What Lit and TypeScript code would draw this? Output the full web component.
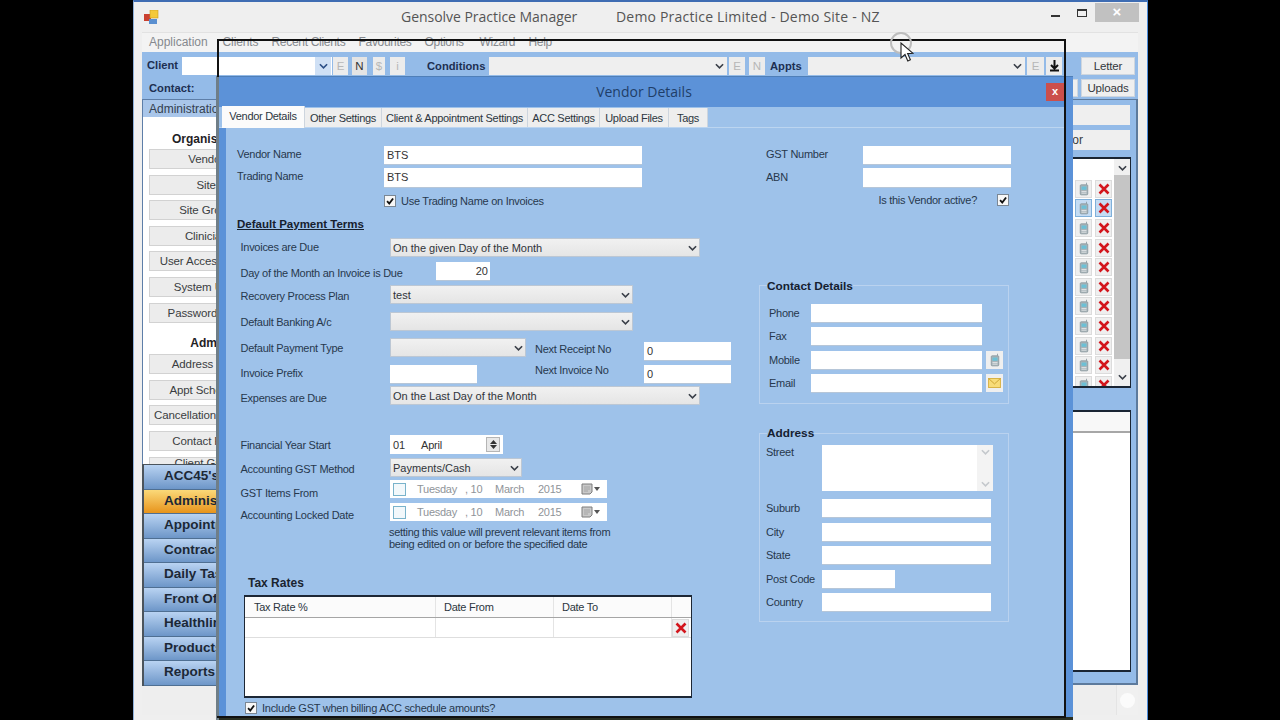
import { LitElement, html, css } from "lit";
import { customElement } from "lit/decorators.js";

const chev = (c = "#3a3f48") => html`<svg class="chev" viewBox="0 0 10 6"><path d="M1 1l4 4 4-4" fill="none" stroke=${c} stroke-width="1.8"/></svg>`;
const redX = html`<svg class="xic" viewBox="0 0 12 12"><path d="M1.5 1.5l9 9M10.5 1.5l-9 9" stroke="#d3151c" stroke-width="2.6" fill="none"/></svg>`;
const phone = html`<svg class="phic" viewBox="0 0 12 16"><rect x="1.5" y="3" width="9" height="12" rx="1" fill="#a9b4b8" stroke="#88979d"/><rect x="3" y="5" width="6" height="4" fill="#6cc0d6"/><path d="M3 11h6M3 13h6" stroke="#e4e8ea"/><path d="M9 3V0.5" stroke="#88979d"/></svg>`;
const mail = html`<svg class="mlic" viewBox="0 0 14 11"><rect x=".5" y=".5" width="13" height="10" fill="#f8dc78" stroke="#d6ae3c"/><path d="M.5.5l6.5 6 6.5-6" fill="none" stroke="#c9a030"/></svg>`;
const cal = html`<svg class="calic" viewBox="0 0 20 12"><path d="M1 1h10v8l-2 2H1z" fill="#c9c9c9" stroke="#7d7d7d"/><path d="M3 4h6M3 6h6M3 8h4" stroke="#a4a4a4"/><path d="M13 4h6l-3 4z" fill="#555"/></svg>`;
const check = html`<span class="cb"><svg viewBox="0 0 12 12"><path d="M2.5 6.2l2.6 2.8 4.6-6" fill="none" stroke="#111" stroke-width="2.2"/></svg></span>`;

const sel = (cls: string, text = "") => html`<div class="sel ${cls}"><span>${text}</span>${chev()}</div>`;
const date = html`<div class="date"><i class="dbox"></i><span class="d1">Tuesday</span><span class="d2">, 10</span><span class="d3">March</span><span class="d4">2015</span>${cal}</div>`;

@customElement("app-root")
export class AppRoot extends LitElement {
  static styles = css`
    :host { display: block; position: relative; width: 1280px; height: 720px; overflow: hidden; background: #000;
      font-family: "Liberation Sans", Arial, sans-serif; font-size: 11px; color: #27384d; }
    * { box-sizing: border-box; }

    .main { position: absolute; left: 133px; top: 0; width: 1015px; height: 720px; background: #efefef; display: flex; flex-direction: column;
      border-top: 2px solid #3f6db3; border-left: 1px solid #8fb0da; border-right: 1px solid #4d8ddc; }
    .title { height: 30px; display: flex; align-items: flex-start; flex: none; font-family: "Open Sans", sans-serif; font-size: 14px; color: #555; }
    .logo { width: 15px; height: 15px; margin: 8px 0 0 10px; flex: none; }
    .t1 { margin: 5px 0 0 242px; width: 215px; letter-spacing: -.03px; white-space: nowrap; }
    .t2 { margin-top: 5px; width: 435px; white-space: nowrap; letter-spacing: .19px; }
    .wmin { width: 9px; height: 2px; background: #333; margin: 13px 0 0 0; }
    .wmax { width: 10px; height: 8px; border: 1px solid #333; border-top-width: 2px; margin: 7px 0 0 17px; }
    .wclose { width: 44px; height: 19px; background: #c1c1c1; margin: 1px 0 0 8px; color: #fff; text-align: center; font-size: 15px; line-height: 18px; font-family: "Liberation Sans", sans-serif; font-weight: bold; }

    .menu { flex: none; height: 20px; margin: 0 9px 0 8px; background: #f3f3f3; display: flex; align-items: center; font-size: 12px; color: #85898e; padding: 0 0 2px 7px; border-top: 1px solid #e2e2e2; }
    .menu span { white-space: nowrap; flex: none; letter-spacing: -.3px; }
    .menu span:nth-child(1) { width: 73.5px; letter-spacing: 0; }
    .menu span:nth-child(2) { width: 49px; letter-spacing: -.1px; }
    .menu span:nth-child(3) { width: 87px; }
    .menu span:nth-child(4) { width: 66px; }
    .menu span:nth-child(5) { width: 55px; }
    .menu span:nth-child(6) { width: 49px; }

    .content { flex: 1; margin: 0 9px 5px 8px; background: #94bbe8; display: flex; flex-direction: column; min-height: 0; position: relative; }
    .bar1 { flex: none; height: 27px; padding: 5px 0 0 5px; display: flex; align-items: flex-start; }
    .blab { font-weight: bold; color: #1d2f52; font-size: 11.2px; line-height: 18px; white-space: nowrap; }
    .bl1 { width: 35px; margin-top: -1px; }
    .bl2 { width: 62px; margin-left: 22px; }
    .bl3 { width: 38px; margin-left: 5px; }
    .combo { height: 18px; display: flex; justify-content: flex-end; align-items: stretch; flex: none; }
    .cwhite { width: 150px; background: #fff; }
    .cw2 { width: 238px; background: #efefef; }
    .cw3 { width: 217px; background: #efefef; }
    .cbtn { width: 16px; display: flex; align-items: center; justify-content: center; }
    .cwhite .cbtn { background: #cfe0f5; margin-right: 1px; }
    .chev { width: 9px; height: 6px; flex: none; }
    .tb { width: 15px; height: 18px; background: #ececec; color: #b7b7b7; text-align: center; line-height: 18px; font-size: 11.5px; flex: none; }
    .tb.on { color: #333; background: #e4e4e4; }
    .ml1 { margin-left: 1px; } .ml2 { margin-left: 2px; } .ml4 { margin-left: 4px; } .ml5 { margin-left: 5px; } .ml6 { margin-left: 6px; }
    .tb.w12 { width: 12px; } .tb.w16 { width: 16px; } .tb.w17 { width: 17px; }
    .tb svg { width: 11px; height: 13px; margin-top: 2px; }
    .wbtn { width: 54px; height: 18px; background: #efefef; border: 1px solid #cfd6de; text-align: center; line-height: 16px; font-size: 11.5px; letter-spacing: -.15px; color: #33373d; flex: none; margin-left: 19px; }

    .bar2 { flex: none; height: 20px; display: flex; align-items: flex-start; padding-left: 7px; }
    .bar2 .spacer { flex: 1; }
    .sliver { width: 60px; height: 18px; background: #efefef; border: 1px solid #cfd6de; flex: none; }
    .bar2 .wbtn { margin: 0 3px 0 3px; }
    .body { flex: 1; display: flex; min-height: 0; justify-content: space-between; }

    .leftb { width: 160px; display: flex; flex-direction: column; position: relative; }
    .tabhead { height: 18px; width: 110px; background: #a9c6ea; border: 1px solid #5d7ea8; border-bottom: 0; padding-left: 6px; line-height: 18px; font-size: 12px; color: #33404f; white-space: nowrap; flex: none; }
    .panel { flex: 1; background: #fff; border-left: 1px solid #5d7ea8; min-height: 0; display: flex; flex-direction: column; align-items: flex-start; padding-left: 6px; }
    .lstat { flex: none; height: 30px; background: #eee; }
    .ph { width: 120px; text-align: center; font-weight: bold; font-size: 12px; color: #1f2225; line-height: 14px; flex: none; white-space: nowrap; }
    .ph1 { margin-top: 15px; margin-bottom: 3px; }
    .ph2 { margin-top: 8px; margin-bottom: 4px; }
    .lb { width: 120px; height: 20px; background: #ececec; border: 1px solid #d2d2d2; margin-bottom: 5.6px; text-align: center; line-height: 18px; font-size: 11.5px; letter-spacing: -.1px; color: #3a3d41; flex: none; white-space: nowrap; }
    .lb.cut { height: 10px; margin: 0; border-bottom: 0; line-height: 11px; }
    .acc { position: absolute; left: 0; top: 365px; width: 160px; border-left: 2px solid #4b545c; border-top: 1px solid #4b545c; }
    .ai { height: 24.5px; background: linear-gradient(#b9d3f2, #6d96c8); border-bottom: 1px solid #4f6f92; padding-left: 20px; font-weight: bold; font-size: 13.5px; line-height: 22px; color: #1c2836; white-space: nowrap; }
    .ai.act { background: linear-gradient(#fbd979, #e7941c); }

    .rightb { width: 100px; margin-bottom: 30px; display: flex; flex-direction: column; border: 1px solid #5d7a9c; border-width: 1px 2px 2px 1px; padding-top: 5px; align-items: stretch; }
    .rbtn { height: 20px; margin-right: 6px; background: #efefef; margin-bottom: 5px; text-align: right; padding-right: 47px; line-height: 20px; font-size: 12px; color: #3a3d41; flex: none; }
    .list { height: 231px; margin: 2px 5px 0 0; background: #fff; border-top: 2px solid #1a2533; border-right: 1px solid #1a2533; border-bottom: 2px solid #1a2533; display: flex; justify-content: flex-end; overflow: hidden; flex: none; }
    .cells { width: 58px; }
    .lhead { height: 20px; }
    .lrow { height: 19.6px; display: flex; padding-left: 19px; gap: 3px; align-items: center; }
    .cell { width: 17px; height: 18px; background: #efefef; border: 1px solid #dcdcdc; display: flex; align-items: center; justify-content: center; flex: none; }
    .lrow.sel2 .cell { background: #c5dcf3; border-color: #7fb0da; }
    .xic { width: 12px; height: 12px; }
    .phic { width: 10px; height: 14px; }
    .mlic { width: 13px; height: 10px; }
    .sb { width: 16px; background: #f0f0f0; flex: none; display: flex; flex-direction: column; align-items: center; padding-top: 6px; }
    .sb .thumb { width: 100%; height: 184px; background: #c5c5c5; margin: 4px 0 15px; }
    .grid2 { height: 262px; margin: 22px 5px 0 0; background: #fff; border: 1px solid #1a2533; border-width: 2px 1px 2px 1px; flex: none; }
    .grid2 div { height: 21px; background: #f8f8f8; border-bottom: 2px solid #a7a7a7; }
    .stbar { height: 30px; display: flex; justify-content: flex-end; background: #eee; position: absolute; right: 0; bottom: 0; width: 100px; }
    .dot { width: 22px; display: flex; align-items: center; justify-content: center; background: #f0f0f0; border-left: 1px solid #e4e4e4; }
    .dot i { width: 15px; height: 15px; border-radius: 50%; background: #fbfbfb; }

    .dialog { position: absolute; left: 216px; top: 76px; width: 857px; height: 644px; background: #5b92d8; border-left: 3px solid #6f7e88; border-top: 1px solid #4f7fb8; display: flex; flex-direction: column; }
    .dtitle { height: 30px; flex: none; display: flex; align-items: center; justify-content: center; font-family: "Open Sans", sans-serif; font-size: 14px; color: #1f3e68; position: relative; padding: 0 4px 2px 0; background: #5c92d8; }
    .dclose { position: absolute; left: 827px; top: 6px; width: 18px; height: 18px; background: #cb4f4c; color: #fff; font: bold 11px/17px "Liberation Sans", sans-serif; text-align: center; }
    .tabs { flex: none; height: 21px; width: 846px; background: #9ec2ea; display: flex; align-items: flex-end; padding-left: 3px; border-bottom: 1px solid #bcd5f0; }
    .tab { height: 19px; background: #eeeeee; border-right: 1px solid #cdd5de; font-size: 11px; letter-spacing: -.3px; line-height: 20px; text-align: center; white-space: nowrap; color: #2c3640; flex: none; }
    .tab.a { height: 22px; width: 83px; background: #fbfbfb; margin-bottom: -1px; line-height: 20px; position: relative; }
    .tb1 { width: 77px; } .tb2 { width: 146px; } .tb3 { width: 72px; } .tb4 { width: 69px; } .tb5 { width: 39px; }
    .page { flex: none; width: 839px; height: 589px; margin-left: 7px; background: #9ec2ea; padding: 18px 0 0 11px; display: flex; position: relative; letter-spacing: -.27px; }
    .dfoot { flex: 1; background: #2a2f22; }

    .lgrid { width: 522px; flex: none; display: grid; grid-template-columns: 153px 369px;
      grid-template-rows: 22px 26px 23px 21px 24px 23px 27px 26px 27px 21px 49px 23px 22px 23px 23px 49px 20px 107px 18px; }
    .lab { line-height: 14px; white-space: nowrap; color: #27384d; }
    .in3 { padding-left: 3.5px; }
    .m1 { margin-top: 1px; } .m2 { margin-top: 2px; } .m3 { margin-top: 3px; } .m4 { margin-top: 4px; } .m5 { margin-top: 5px; } .m6 { margin-top: 6px; } .mn2 { margin-top: -2px; }
    .inp { background: #fff; height: 18px; box-shadow: 0 1px 0 #b6c6d8; line-height: 18px; padding: 0 3px; color: #333; white-space: nowrap; flex: none; font-size: 11px; letter-spacing: 0; }
    .h19 { height: 19px; }
    .nudge { margin-left: -6px; width: 258px; }
    .sel { height: 19px; background: linear-gradient(#f1f1f1, #e5e5e5); border: 1px solid #bcc7d4; display: flex; align-items: center; justify-content: space-between; padding: 0 2px 0 2px; color: #30343a; flex: none; font-size: 11px; letter-spacing: 0; }
    .w310 { width: 310px; } .w243 { width: 243px; } .w136 { width: 136px; } .w132 { width: 132px; }
    .ccheck { margin-left: -6px; display: flex; align-items: center; gap: 5px; height: 14px; }
    .cb { width: 12px; height: 12px; background: #f7f7f7; border: 1px solid #7b8794; display: inline-flex; flex: none; }
    .cb svg { width: 10px; height: 10px; }
    .head { grid-column: 1 / -1; font-weight: bold; font-size: 11.5px; text-decoration: underline; color: #16202e; line-height: 14px; white-space: nowrap; letter-spacing: 0; }
    .num { width: 54px; margin-left: 46px; text-align: right; padding-right: 2px; }
    .pair { display: flex; align-items: flex-start; }
    .plab { line-height: 14px; white-space: nowrap; width: 109px; flex: none; }
    .pin { width: 87px; }
    .w87 { width: 87px; }
    .ml9 { margin-left: 9px; } .ml58 { margin-left: 58px; }
    .spin { width: 113px; height: 19px; background: #fff; display: flex; align-items: center; padding-left: 3px; color: #333; letter-spacing: 0; }
    .spin .sm { width: 28px; }
    .spin .sa { width: 65px; letter-spacing: -.2px; }
    .sp { width: 14px; height: 15px; border: 1px solid #b5b5b5; background: #e8e8e8; display: flex; flex-direction: column; align-items: center; justify-content: space-around; padding: 2px 0; }
    .sp svg { width: 7px; height: 4px; }
    .date { width: 217px; height: 18px; background: #fff; display: flex; align-items: center; color: #8f9499; position: relative; flex: none; }
    .dbox { width: 13px; height: 13px; border: 1px solid #79b3cb; background: #f2f8fb; margin-left: 3px; flex: none; }
    .d1 { margin-left: 11px; width: 48px; } .d2 { width: 30px; } .d3 { width: 43px; } .d4 { width: 43px; }
    .calic { width: 20px; height: 12px; flex: none; }
    .note { line-height: 12px; color: #27384d; margin-left: -1px; white-space: nowrap; letter-spacing: -.3px; }
    .thead { grid-column: 1 / -1; padding: 1px 0 0 11px; font-weight: bold; font-size: 12px; color: #1a2430; line-height: 14px; letter-spacing: 0; }
    .ttable { grid-column: 1 / -1; margin-left: 7px; width: 448px; height: 103px; background: #fff; border: 2px solid #1d2735; border-width: 2px 1.5px; display: flex; flex-direction: column; }
    .tr { display: grid; grid-template-columns: 191px 118px 118px 1fr; flex: none; }
    .tr.h { height: 21px; border-bottom: 1px solid #a5a5a5; line-height: 20px; background: #fbfbfb; }
    .tr.d { height: 20px; border-bottom: 1px solid #dedede; }
    .tr > span { border-right: 1px solid #e4e4e4; padding-left: 8px; white-space: nowrap; color: #2c3640; }
    .tr > span:first-child { padding-left: 9px; }
    .tr > span:last-child { border-right: 0; padding: 0; display: flex; align-items: center; }
    .incl { grid-column: 1 / -1; margin-left: 8px; display: flex; gap: 5px; align-items: center; height: 12px; white-space: nowrap; }

    .rcol { width: 252px; flex: none; display: flex; flex-direction: column; }
    .rrow { display: flex; padding-left: 7px; }
    .rrow .lab { width: 97px; flex: none; }
    .r1 { height: 22px; } .r2 { height: 26px; }
    .active { height: 14px; display: flex; justify-content: flex-end; align-items: flex-start; gap: 20px; padding-right: 2px; }
    .active .lab { margin-top: -1px; }
    .rw { width: 148px; }
    .group { border: 1px solid #bad2ef; width: 250px; flex: none; position: relative; display: flex; flex-direction: column; }
    .legend { font-weight: bold; font-size: 11.8px; line-height: 14px; color: #152030; background: #9ec2ea; margin: -8px 0 0 7px; width: fit-content; white-space: nowrap; flex: none; letter-spacing: 0; }
    .g1 { margin-top: 77px; height: 119px; }
    .g1 .legend { margin-top: -7px; }
    .g2 { margin-top: 29px; height: 189px; }
    .grow { display: flex; align-items: flex-start; flex: none; }
    .g1 .grow { height: 23.4px; padding-left: 9px; }
    .g1 .lab { width: 42px; margin-top: 2px; flex: none; }
    .g1 .inp { width: 171px; }
    .g1 .rows { margin-top: 11px; }
    .ibtn { width: 17px; height: 18px; margin-left: 4px; background: #efefef; display: flex; align-items: center; justify-content: center; flex: none; }
    .g2 .grow { height: 23.5px; padding-left: 6px; }
    .g2 .lab { width: 56px; margin-top: 2px; flex: none; }
    .g2 .inp { width: 169px; }
    .g2 .w73 { width: 73px; }
    .tarea { width: 171px; height: 46px; background: #fff; flex: none; display: flex; justify-content: flex-end; }
    .tsb { width: 16px; background: #f3f3f3; display: flex; flex-direction: column; justify-content: space-between; align-items: center; padding: 4px 0; }
    .g2 .street { height: 54px; margin-top: 5px; }
    .g2 .street .lab { margin-top: 0; }

    .frame { position: absolute; left: 217px; top: 39px; width: 849px; height: 679px; border: 2px solid #111; border-left: 0; pointer-events: none; }
    .frame::before { content: ""; position: absolute; left: 0; top: -2px; width: 2px; height: 38px; background: #111; }
    .ring { position: absolute; left: 890px; top: 32px; width: 22px; height: 22px; border-radius: 50%; border: 2px solid #bdbdbd; }
    .cursor { position: absolute; left: 900px; top: 42px; width: 14px; height: 21px; }
  `;

  render() {
    const lefts = ["Vendors", "Sites", "Site Groups", "Clinicians", "User Access Levels", "System Users", "Password Policy"];
    const adm = ["Address Types", "Appt Schedules", "Cancellation Reasons", "Contact Points"];
    const acc = ["ACC45's", "Administ", "Appointments", "Contracts", "Daily Tasks", "Front Office", "Healthlink", "Products", "Reports"];
    const rows = Array.from({ length: 11 }, (_, i) => i);
    return html`
      <div class="main">
        <div class="title">
          <svg class="logo" viewBox="0 0 15 15">
            <rect x="0" y="4" width="7" height="7" fill="#c9402f"/>
            <rect x="6" y="0" width="8" height="8" fill="#f4c93a" stroke="#c99b20" stroke-width=".6"/>
            <rect x="5" y="9" width="8" height="5" fill="#5a8fd0"/>
          </svg>
          <span class="t1">Gensolve Practice Manager</span>
          <span class="t2">Demo Practice Limited - Demo Site - NZ</span>
          <span class="wmin"></span><span class="wmax"></span><span class="wclose">×</span>
        </div>
        <div class="menu">
          <span>Application</span><span>Clients</span><span>Recent Clients</span><span>Favourites</span><span>Options</span><span>Wizard</span><span>Help</span>
        </div>
        <div class="content">
          <div class="bar1">
            <span class="blab bl1">Client</span>
            <div class="combo cwhite"><span class="cbtn">${chev("#2c4f86")}</span></div>
            <span class="tb ml1">E</span><span class="tb on ml4">N</span><span class="tb w12 ml6">$</span><span class="tb ml5">i</span>
            <span class="blab bl2">Conditions</span>
            <div class="combo cw2"><span class="cbtn">${chev()}</span></div>
            <span class="tb w16 ml2">E</span><span class="tb w16 ml4">N</span>
            <span class="blab bl3">Appts</span>
            <div class="combo cw3"><span class="cbtn">${chev()}</span></div>
            <span class="tb w17 ml2">E</span>
            <span class="tb w16 ml2"><svg viewBox="0 0 11 13"><path d="M5.5 1v7M2 6l3.5 3.5L9 6M1 11.5h9" fill="none" stroke="#111" stroke-width="2"/></svg></span>
            <span class="wbtn">Letter</span>
          </div>
          <div class="bar2">
            <span class="blab">Contact:</span>
            <span class="spacer"></span>
            <span class="sliver"></span>
            <span class="wbtn">Uploads</span>
          </div>
          <div class="body">
            <div class="leftb">
              <div class="tabhead">Administration</div>
              <div class="panel">
                <div class="ph ph1">Organisation</div>
                ${lefts.map((t) => html`<div class="lb">${t}</div>`)}
                <div class="ph ph2">Admin</div>
                ${adm.map((t) => html`<div class="lb">${t}</div>`)}
                <div class="lb cut">Client Groups</div>
              </div>
              <div class="lstat"></div>
              <div class="acc">
                ${acc.map((t, i) => html`<div class="ai ${i === 1 ? "act" : ""}">${t}</div>`)}
              </div>
            </div>
            <div class="rightb">
              <div class="rbtn"></div>
              <div class="rbtn">Editor</div>
              <div class="list">
                <div class="cells">
                  <div class="lhead"></div>
                  ${rows.map((i) => html`<div class="lrow ${i === 1 ? "sel2" : ""}"><span class="cell">${phone}</span><span class="cell">${redX}</span></div>`)}
                </div>
                <div class="sb">${chev()}<div class="thumb"></div>${chev()}</div>
              </div>
              <div class="grid2"><div></div></div>
            </div>
          </div>
          <div class="stbar"><span class="dot"><i></i></span></div>
        </div>
      </div>

      <div class="dialog">
        <div class="dtitle">Vendor Details<span class="dclose">x</span></div>
        <div class="tabs">
          <span class="tab a">Vendor Details</span><span class="tab tb1">Other Settings</span><span class="tab tb2">Client &amp; Appointment Settings</span><span class="tab tb3">ACC Settings</span><span class="tab tb4">Upload Files</span><span class="tab tb5">Tags</span>
        </div>
        <div class="page">
          <div class="lgrid">
            <span class="lab m1">Vendor Name</span><div class="inp nudge">BTS</div>
            <span class="lab m1">Trading Name</span><div class="inp h19 nudge">BTS</div>
            <span></span><div class="ccheck">${check}<span class="lab">Use Trading Name on Invoices</span></div>
            <div class="head">Default Payment Terms</div>
            <span class="lab in3 m2">Invoices are Due</span>${sel("w310", "On the given Day of the Month")}
            <span class="lab in3 m4">Day of the Month an Invoice is Due</span><div class="inp num">20</div>
            <span class="lab in3 m4">Recovery Process Plan</span>${sel("w243", "test")}
            <span class="lab in3 m3">Default Banking A/c</span>${sel("w243")}
            <span class="lab in3 m3">Default Payment Type</span>
            <div class="pair">${sel("w136")}<span class="plab ml9 m4">Next Receipt No</span><div class="inp pin m4">0</div></div>
            <span class="lab in3 m1">Invoice Prefix</span>
            <div class="pair"><div class="inp w87"></div><span class="plab ml58 mn2">Next Invoice No</span><div class="inp pin">0</div></div>
            <span class="lab in3 m5">Expenses are Due</span>${sel("w310", "On the Last Day of the Month")}
            <span class="lab in3 m3">Financial Year Start</span>
            <div class="spin"><span class="sm">01</span><span class="sa">April</span>
              <span class="sp"><svg viewBox="0 0 7 4"><path d="M3.5 0L7 4H0z" fill="#333"/></svg><svg viewBox="0 0 7 4"><path d="M0 0h7L3.5 4z" fill="#333"/></svg></span></div>
            <span class="lab in3 m4">Accounting GST Method</span>${sel("w132", "Payments/Cash")}
            <span class="lab in3 m6">GST Items From</span>${date}
            <span class="lab in3 m5">Accounting Locked Date</span>${date}
            <span></span><div class="note">setting this value will prevent relevant items from<br />being edited on or before the specified date</div>
            <div class="thead">Tax Rates</div>
            <div class="ttable">
              <div class="tr h"><span>Tax Rate %</span><span>Date From</span><span>Date To</span><span></span></div>
              <div class="tr d"><span></span><span></span><span></span><span><i class="cell">${redX}</i></span></div>
            </div>
            <div class="incl">${check}<span class="lab">Include GST when billing ACC schedule amounts?</span></div>
          </div>

          <div class="rcol">
            <div class="rrow r1"><span class="lab m1">GST Number</span><div class="inp rw"></div></div>
            <div class="rrow r2"><span class="lab m2">ABN</span><div class="inp h19 rw"></div></div>
            <div class="active"><span class="lab">Is this Vendor active?</span>${check}</div>
            <div class="group g1">
              <div class="legend">Contact Details</div>
              <div class="rows">
                <div class="grow"><span class="lab">Phone</span><div class="inp"></div></div>
                <div class="grow"><span class="lab">Fax</span><div class="inp"></div></div>
                <div class="grow"><span class="lab">Mobile</span><div class="inp"></div><span class="ibtn">${phone}</span></div>
                <div class="grow"><span class="lab">Email</span><div class="inp"></div><span class="ibtn">${mail}</span></div>
              </div>
            </div>
            <div class="group g2">
              <div class="legend">Address</div>
              <div class="grow street"><span class="lab">Street</span>
                <div class="tarea"><div class="tsb">${chev("#c4c8cc")}${chev("#c4c8cc")}</div></div></div>
              <div class="grow"><span class="lab">Suburb</span><div class="inp"></div></div>
              <div class="grow"><span class="lab">City</span><div class="inp"></div></div>
              <div class="grow"><span class="lab">State</span><div class="inp"></div></div>
              <div class="grow"><span class="lab">Post Code</span><div class="inp w73"></div></div>
              <div class="grow"><span class="lab">Country</span><div class="inp"></div></div>
            </div>
          </div>
        </div>
        <div class="dfoot"></div>
      </div>

      <div class="frame"></div>
      <div class="ring"></div>
      <svg class="cursor" viewBox="0 0 14 21"><path d="M1 1v15l4-3.5 2.8 6.5 2.6-1.2-2.8-6.2 5.4-.3z" fill="#fff" stroke="#222" stroke-width="1.1"/></svg>
    `;
  }
}
